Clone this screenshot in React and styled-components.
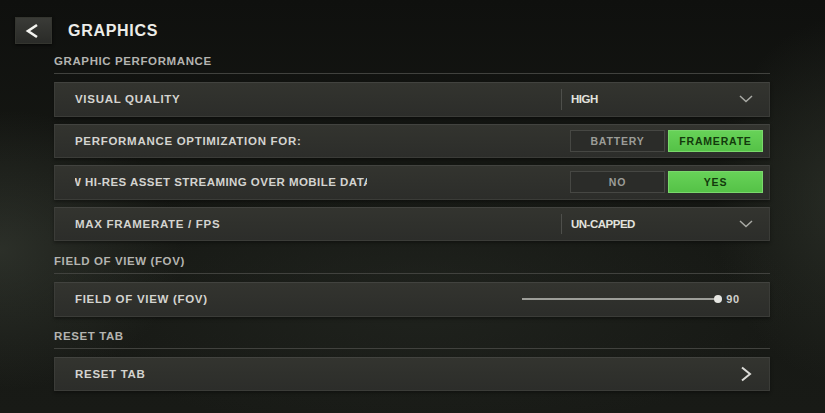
import React from "react";
import styled, { createGlobalStyle } from "styled-components";

const Global = createGlobalStyle`
  html, body { margin: 0; padding: 0; }
  body {
    width: 825px;
    height: 413px;
    overflow: hidden;
    font-family: "Liberation Sans", Arial, sans-serif;
    background:
      radial-gradient(ellipse 260px 200px at 0px 250px, rgba(70,76,66,0.45), transparent 70%),
      radial-gradient(ellipse 180px 260px at 840px 200px, rgba(60,66,56,0.45), transparent 70%),
      radial-gradient(ellipse 500px 180px at 420px 300px, rgba(40,44,38,0.5), transparent 75%),
      linear-gradient(180deg, #0f100e 0%, #151713 40%, #181a16 100%);
    color: #d6d6d2;
  }
`;

const Page = styled.div`
  box-sizing: border-box;
  width: 825px;
  height: 413px;
  padding: 17px 55px 0 15px;
`;

const Header = styled.header`
  display: flex;
  align-items: center;
  gap: 16px;
  height: 27px;
`;

const BackButton = styled.button`
  box-sizing: border-box;
  width: 37px;
  height: 27px;
  padding: 0 4px 0 0;
  border: 1px solid #34352f;
  background: linear-gradient(180deg, #3a3b37 0%, #2a2b28 100%);
  box-shadow: 0 1px 3px rgba(0,0,0,0.7);
  display: flex;
  align-items: center;
  justify-content: center;
`;

const Title = styled.h1`
  margin: 0;
  font-size: 16px;
  font-weight: 700;
  letter-spacing: 0.7px;
  color: #ecece8;
`;

const Content = styled.main`
  margin-left: 39px;
  width: 716px;
`;

const SectionHeader = styled.div`
  box-sizing: border-box;
  height: ${(p) => p.$h}px;
  padding-top: ${(p) => p.$pt}px;
  border-bottom: 1px solid #41423e;
  display: flex;
  align-items: center;
  font-size: 11.5px;
  font-weight: 700;
  letter-spacing: 0.6px;
  color: #b4b4b0;
`;

const Group = styled.div`
  display: flex;
  flex-direction: column;
  gap: 7px;
  margin-top: 8px;
`;

const Row = styled.div`
  box-sizing: border-box;
  height: 34.5px;
  display: flex;
  align-items: center;
  border: 1px solid #3b3c38;
  border-top-color: #42433f;
  background: linear-gradient(180deg, #33342f 0%, #2c2d2a 100%);
  box-shadow: 0 2px 3px rgba(0,0,0,0.35);
  padding-left: 20px;
`;

const Label = styled.span`
  flex: 1;
  font-size: 11.5px;
  font-weight: 700;
  letter-spacing: 0.7px;
  color: #d4d4d0;
  white-space: nowrap;
`;

const ClippedLabel = styled.div`
  width: 292px;
  overflow: hidden;
  white-space: nowrap;
  font-size: 11.5px;
  font-weight: 700;
  letter-spacing: 0.45px;
  color: #d4d4d0;
  text-indent: ${(p) => p.$shift}px;
  margin-right: auto;
`;

const Dropdown = styled.div`
  box-sizing: border-box;
  width: 208px;
  height: 100%;
  display: flex;
  align-items: center;
  padding: 0 16px 0 10px;
  position: relative;
  &::before {
    content: "";
    position: absolute;
    left: 0;
    top: 6px;
    bottom: 6px;
    width: 1px;
    background: #4e4f4b;
  }
`;

const Value = styled.span`
  flex: 1;
  font-size: 11.5px;
  font-weight: 700;
  letter-spacing: -0.5px;
  color: #e2e2de;
`;

const Toggle = styled.div`
  display: flex;
  gap: 3px;
  margin-right: 6px;
`;

const ToggleOption = styled.div`
  box-sizing: border-box;
  width: 95px;
  height: 22px;
  display: flex;
  align-items: center;
  justify-content: center;
  font-size: 10.5px;
  font-weight: 700;
  letter-spacing: 0.8px;
  border: 1px solid ${(p) => (p.$active ? "#7ad86c" : "#464743")};
  background: ${(p) => (p.$active ? "linear-gradient(180deg, #67d258 0%, #55c247 100%)" : "#2b2c29")};
  color: ${(p) => (p.$active ? "#133a0c" : "#9c9d98")};
`;

const Slider = styled.div`
  display: flex;
  align-items: center;
  margin-right: 29px;
`;

const Track = styled.div`
  width: 196px;
  height: 2px;
  background: #9d9e99;
  position: relative;
  &::after {
    content: "";
    position: absolute;
    right: -4px;
    top: -3px;
    width: 8px;
    height: 8px;
    border-radius: 50%;
    background: #e6e6e2;
  }
`;

const SliderValue = styled.span`
  margin-left: 8px;
  font-size: 11px;
  font-weight: 700;
  letter-spacing: 0.8px;
  color: #d0d0cc;
`;

const ArrowBox = styled.div`
  margin-right: 17px;
  display: flex;
  align-items: center;
`;

const ChevronDown = () => (
  <svg width="14" height="8" viewBox="0 0 14 8">
    <polyline points="1,1 7,6.5 13,1" fill="none" stroke="#a9aaa5" strokeWidth="1.5" />
  </svg>
);

const ChevronRight = () => (
  <svg width="12" height="16" viewBox="0 0 12 16">
    <polyline points="2,1.5 10,8 2,14.5" fill="none" stroke="#dcdcd8" strokeWidth="2" />
  </svg>
);

const BackIcon = () => (
  <svg width="14" height="16" viewBox="0 0 14 16">
    <polyline points="12,2 3,8 12,14" fill="none" stroke="#f4f4f0" strokeWidth="2.6" strokeLinejoin="miter" />
  </svg>
);

export default function App() {
  return (
    <>
      <Global />
      <Page>
        <Header>
          <BackButton aria-label="Back">
            <BackIcon />
          </BackButton>
          <Title>GRAPHICS</Title>
        </Header>
        <Content>
          <SectionHeader $h={30} $pt={5}>GRAPHIC PERFORMANCE</SectionHeader>
          <Group>
            <Row>
              <Label>VISUAL QUALITY</Label>
              <Dropdown>
                <Value>HIGH</Value>
                <ChevronDown />
              </Dropdown>
            </Row>
            <Row>
              <Label>PERFORMANCE OPTIMIZATION FOR:</Label>
              <Toggle>
                <ToggleOption>BATTERY</ToggleOption>
                <ToggleOption $active>FRAMERATE</ToggleOption>
              </Toggle>
            </Row>
            <Row>
              <ClippedLabel $shift={-38}>ALLOW HI-RES ASSET STREAMING OVER MOBILE DATA</ClippedLabel>
              <Toggle>
                <ToggleOption>NO</ToggleOption>
                <ToggleOption $active>YES</ToggleOption>
              </Toggle>
            </Row>
            <Row>
              <Label>MAX FRAMERATE / FPS</Label>
              <Dropdown>
                <Value>UN-CAPPED</Value>
                <ChevronDown />
              </Dropdown>
            </Row>
          </Group>
          <SectionHeader $h={33} $pt={7}>FIELD OF VIEW (FOV)</SectionHeader>
          <Group>
            <Row>
              <Label>FIELD OF VIEW (FOV)</Label>
              <Slider>
                <Track />
                <SliderValue>90</SliderValue>
              </Slider>
            </Row>
          </Group>
          <SectionHeader $h={32} $pt={7}>RESET TAB</SectionHeader>
          <Group>
            <Row>
              <Label>RESET TAB</Label>
              <ArrowBox>
                <ChevronRight />
              </ArrowBox>
            </Row>
          </Group>
        </Content>
      </Page>
    </>
  );
}
